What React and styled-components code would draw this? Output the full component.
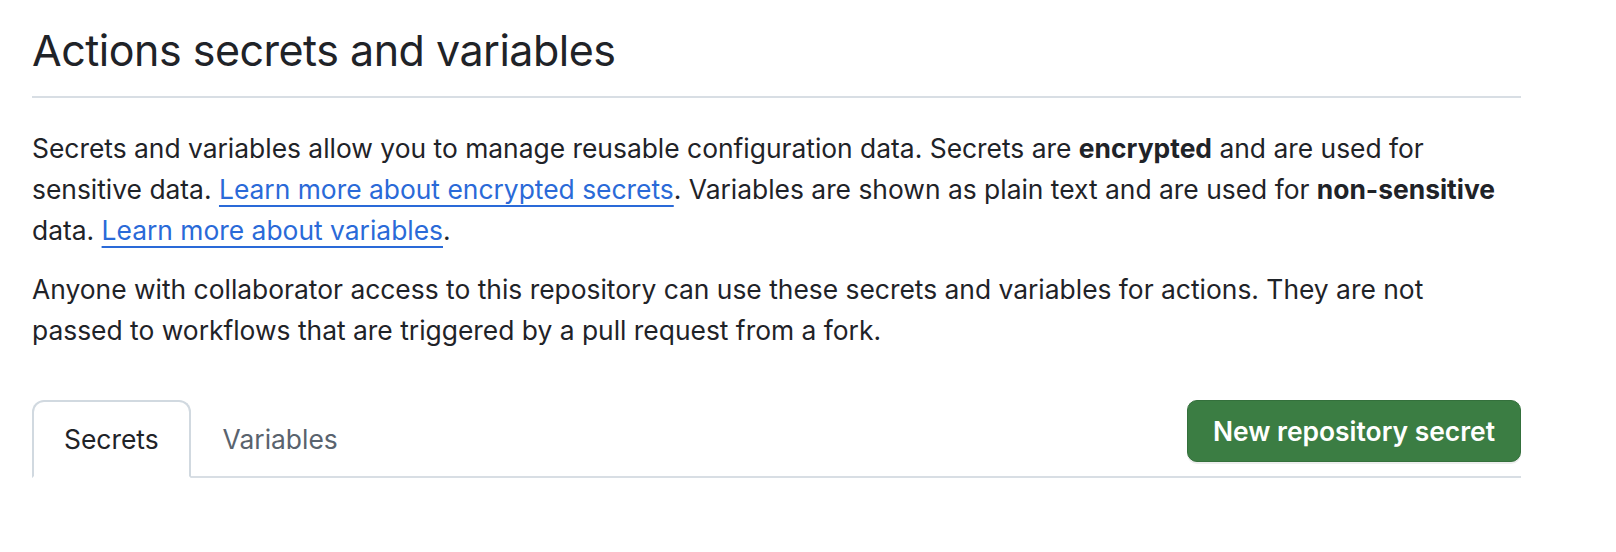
import React, { useState } from 'react';
import styled, { createGlobalStyle } from 'styled-components';

const GlobalStyle = createGlobalStyle`
  html, body {
    margin: 0;
    padding: 0;
    background: #ffffff;
    overflow: hidden;
  }
  body {
    font-family: Inter, "Liberation Sans", Arial, sans-serif;
    color: #1f2328;
  }
  *, *::before, *::after {
    box-sizing: border-box;
  }
`;

const Page = styled.div`
  width: 1521px;
  padding: 24px 0 0 32px;
`;

const Header = styled.div`
  border-bottom: 2px solid #d8dee4;
  padding-bottom: 20px;
  margin-bottom: 30px;
`;

const Title = styled.h2`
  margin: 0;
  font-size: 43px;
  font-weight: 400;
  line-height: 52px;
  letter-spacing: -0.5px;
`;

const Paragraph = styled.p`
  margin: 0 0 18px;
  font-size: 26.4px;
  line-height: 41px;
  white-space: nowrap;
`;

const Link = styled.a`
  color: #2a6ad8;
  text-decoration: underline;
  text-decoration-thickness: 2px;
  text-underline-offset: 6px;
`;

const TabBar = styled.div`
  display: flex;
  align-items: flex-end;
  justify-content: space-between;
  margin-top: 49px;
  border-bottom: 2px solid #d8dee4;
`;

const Tabs = styled.div`
  display: flex;
`;

const Tab = styled.button`
  height: 78px;
  padding: 0 30px;
  margin-bottom: -2px;
  font-family: inherit;
  font-size: 26.4px;
  background: ${p => (p.$active ? '#ffffff' : 'transparent')};
  color: ${p => (p.$active ? '#1f2328' : '#59636e')};
  border: 2px solid ${p => (p.$active ? '#d1d9e0' : 'transparent')};
  border-bottom-color: ${p => (p.$active ? '#ffffff' : 'transparent')};
  border-radius: 12px 12px 0 0;
  cursor: pointer;
`;

const PrimaryButton = styled.button`
  align-self: flex-start;
  height: 62px;
  padding: 0 25px;
  font-family: inherit;
  font-size: 26.4px;
  font-weight: 600;
  color: #ffffff;
  background: #3b7d43;
  border: 1px solid #34703c;
  border-radius: 10px;
  box-shadow: 0 2px 0 rgba(31, 35, 40, 0.08);
  cursor: pointer;
`;

export default function App() {
  const [tab, setTab] = useState('secrets');

  return (
    <>
      <GlobalStyle />
      <Page>
        <Header>
          <Title>Actions secrets and variables</Title>
        </Header>
        <Paragraph>
          Secrets and variables allow you to manage reusable configuration data. Secrets are{' '}
          <strong>encrypted</strong> and are used for
          <br />
          sensitive data. <Link href="#">Learn more about encrypted secrets</Link>. Variables are
          shown as plain text and are used for <strong>non-sensitive</strong>
          <br />
          data. <Link href="#">Learn more about variables</Link>.
        </Paragraph>
        <Paragraph>
          Anyone with collaborator access to this repository can use these secrets and variables
          for actions. They are not
          <br />
          passed to workflows that are triggered by a pull request from a fork.
        </Paragraph>
        <TabBar>
          <Tabs>
            <Tab $active={tab === 'secrets'} onClick={() => setTab('secrets')}>
              Secrets
            </Tab>
            <Tab $active={tab === 'variables'} onClick={() => setTab('variables')}>
              Variables
            </Tab>
          </Tabs>
          <PrimaryButton>New repository secret</PrimaryButton>
        </TabBar>
      </Page>
    </>
  );
}
